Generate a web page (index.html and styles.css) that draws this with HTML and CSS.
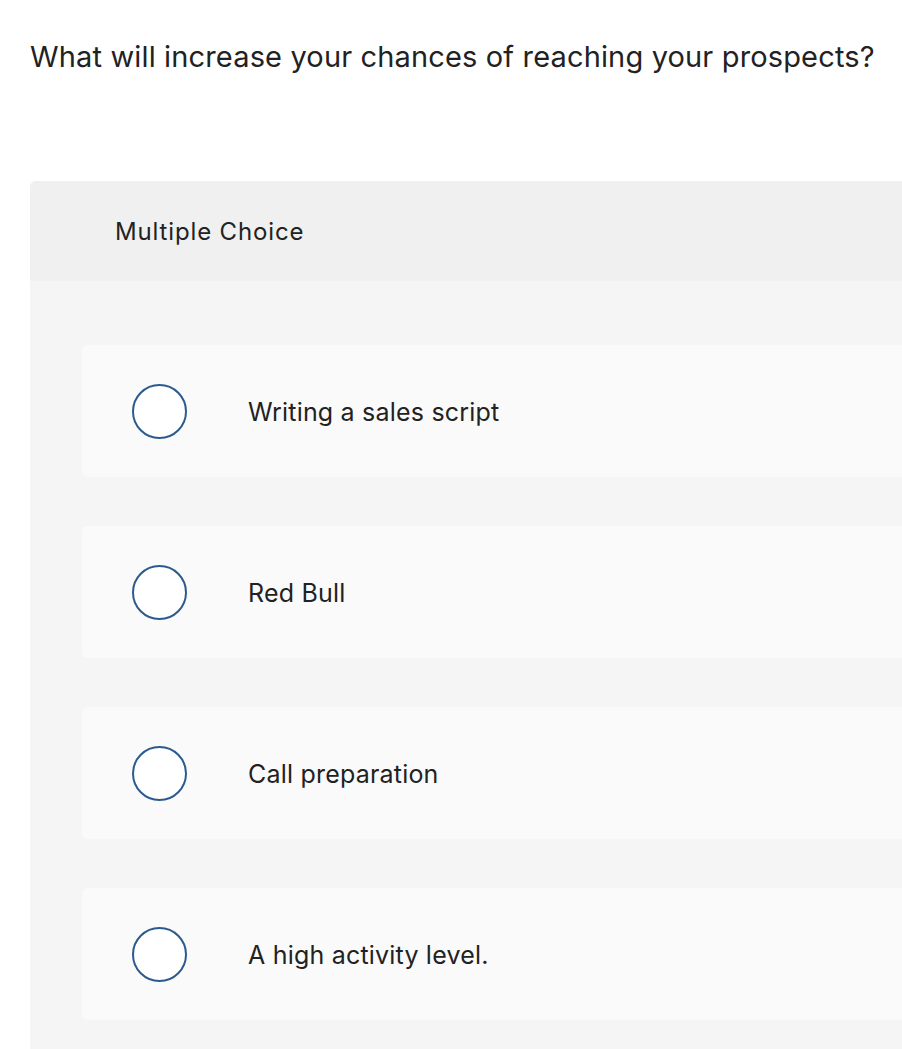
FILE: index.html
```html
<!DOCTYPE html>
<html>
<head>
<meta charset="utf-8">
<link rel="stylesheet" href="styles.css">
</head>
<body>
<div class="page">
  <h1 class="question">What will increase your chances of reaching your prospects?</h1>
  <section class="panel">
    <div class="panel-head">Multiple Choice</div>
    <div class="panel-body">
      <label class="option"><span class="radio"></span><span class="opt-text">Writing a sales script</span></label>
      <label class="option"><span class="radio"></span><span class="opt-text">Red Bull</span></label>
      <label class="option"><span class="radio"></span><span class="opt-text">Call preparation</span></label>
      <label class="option"><span class="radio"></span><span class="opt-text">A high activity level.</span></label>
    </div>
  </section>
</div>
</body>
</html>
```

FILE: styles.css
```css
html, body {
  margin: 0;
  padding: 0;
  background: #ffffff;
  overflow: hidden;
}
body {
  font-family: "Inter", "Open Sans", sans-serif;
  color: #222222;
}
.page {
  width: 1000px;
  padding: 37px 0 0 30px;
}
.question {
  margin: 0;
  font-size: 29px;
  font-weight: 400;
  line-height: 40px;
  letter-spacing: 0.15px;
  color: #222222;
}
.panel {
  margin-top: 104px;
  border-radius: 6px 0 0 0;
  overflow: hidden;
  background: #f5f5f5;
}
.panel-head {
  height: 100px;
  background: #f0f0f0;
  display: flex;
  align-items: center;
  padding-left: 85px;
  font-size: 24px;
  letter-spacing: 0.85px;
}
.panel-body {
  padding: 64px 0 40px 52px;
  display: flex;
  flex-direction: column;
  gap: 49px;
}
.option {
  height: 132px;
  background: #fafafa;
  border-radius: 6px 0 0 6px;
  display: flex;
  align-items: center;
  padding-left: 50px;
}
.radio {
  width: 51px;
  height: 51px;
  border: 2px solid #2c5a8e;
  border-radius: 50%;
  background: #ffffff;
  flex: none;
}
.opt-text {
  margin-left: 61px;
  padding-top: 2px;
  font-size: 25px;
  letter-spacing: 0.2px;
}
```
